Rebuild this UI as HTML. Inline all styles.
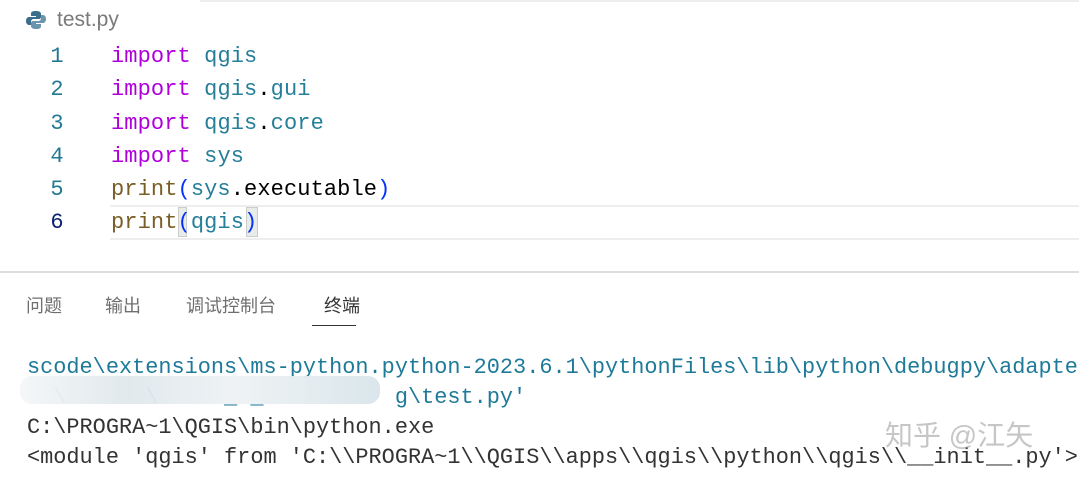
<!DOCTYPE html>
<html><head><meta charset="utf-8"><style>
body{margin:0;width:1079px;height:477px;background:#fff;position:relative;overflow:hidden;font-family:"Liberation Mono",monospace}
.a{position:absolute;white-space:pre}
.ln{color:#237893;font-size:22px;width:30px;text-align:center;left:42px}
.c{font-size:22px;left:111px;letter-spacing:0.1px}
.k{color:#af00db}.m{color:#267f99}.f{color:#795e26}.p{color:#0431fa}.d{color:#000}
.t{font-family:"Liberation Sans","Noto Sans CJK SC",sans-serif;font-size:18px;color:#6f6f6f;top:292px}
.o{font-size:21.9px;left:27px;color:#333}
</style></head><body>
<div class="a" style="left:200px;top:0;width:879px;height:2px;background:#eee"></div>
<svg class="a" style="left:26px;top:10px" width="20" height="20" viewBox="0 0 20 20"><path d="M10 1c-4 0-5 1-5 3v2h5v1H3C1 7 0 9 0 11s1 4 3 4h2v-3c0-2 1-3 3-3h5c1 0 2-1 2-2V4c0-2-2-3-5-3z" fill="#3b6e8c"/><path d="M10 19c4 0 5-1 5-3v-2h-5v-1h7c2 0 3-2 3-4s-1-4-3-4h-2v3c0 2-1 3-3 3H7c-1 0-2 1-2 2v3c0 2 2 3 5 3z" fill="#6a95ad"/></svg>
<div class="a" style="left:57px;top:8px;font-family:'Liberation Sans',sans-serif;font-size:21px;color:#7a7a7a">test.py</div>
<div class="a" style="left:110px;top:205px;width:969px;height:31px;border-top:2px solid #eee;border-bottom:2px solid #eee"></div>
<div class="a" style="left:178px;top:207px;width:9px;height:30px;background:#e8ece8;border:1px solid #ccc;box-sizing:border-box"></div>
<div class="a" style="left:246px;top:207px;width:12px;height:30px;background:#e8ece8;border:1px solid #ccc;box-sizing:border-box"></div>
<div class="a ln" style="top:44px">1</div><div class="a c" style="top:44px"><span class="k">import</span> <span class="m">qgis</span></div>
<div class="a ln" style="top:77px">2</div><div class="a c" style="top:77px"><span class="k">import</span> <span class="m">qgis</span><span class="d">.</span><span class="m">gui</span></div>
<div class="a ln" style="top:111px">3</div><div class="a c" style="top:111px"><span class="k">import</span> <span class="m">qgis</span><span class="d">.</span><span class="m">core</span></div>
<div class="a ln" style="top:144px">4</div><div class="a c" style="top:144px"><span class="k">import</span> <span class="m">sys</span></div>
<div class="a ln" style="top:177px">5</div><div class="a c" style="top:177px"><span class="f">print</span><span class="p">(</span><span class="m">sys</span><span class="d">.executable</span><span class="p">)</span></div>
<div class="a ln" style="top:210px;color:#0b216f">6</div><div class="a c" style="top:210px"><span class="f">print</span><span class="p">(</span><span class="m">qgis</span><span class="p">)</span></div>
<div class="a" style="left:0;top:271px;width:1079px;height:2px;background:#ddd"></div>
<div class="a t" style="left:26px">问题</div>
<div class="a t" style="left:105px">输出</div>
<div class="a t" style="left:186px">调试控制台</div>
<div class="a t" style="left:324px;color:#333">终端</div>
<div class="a" style="left:312px;top:325px;width:44px;height:1px;background:#333"></div>
<div class="a o" style="top:355px;color:#1f7a99">scode\extensions\ms-python.python-2023.6.1\pythonFiles\lib\python\debugpy\adapter</div>
<div class="a o" style="top:385px;color:#1f7a99">  \      \     _ _          g\test.py'</div>
<div class="a" style="left:20px;top:376px;width:360px;height:28px;background:linear-gradient(90deg,#f4f6f7,#dfe8ec 30%,#eef2f4 60%,#d8e5ea);border-radius:12px;opacity:.95"></div>
<div class="a o" style="top:415px">C:\PROGRA~1\QGIS\bin\python.exe</div>
<div class="a o" style="top:445px">&lt;module 'qgis' from 'C:\\PROGRA~1\\QGIS\\apps\\qgis\\python\\qgis\\__init__.py'&gt;</div>
<div class="a" style="left:885px;top:414px;font-family:'Liberation Sans','Noto Sans CJK SC',sans-serif;font-size:28px;color:rgba(160,160,160,.6)">知乎 @江矢</div>
</body></html>
